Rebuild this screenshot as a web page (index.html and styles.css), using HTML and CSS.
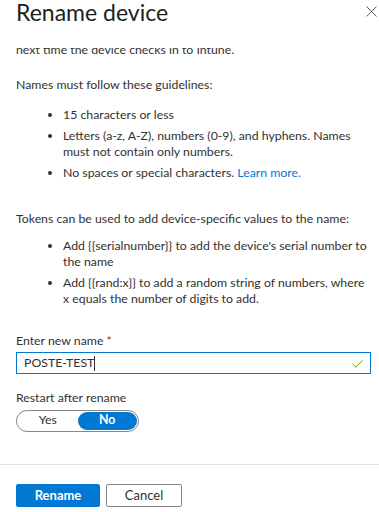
FILE: index.html
```html
<!DOCTYPE html>
<html>
<head>
<meta charset="utf-8">
<link rel="stylesheet" href="styles.css">
</head>
<body>
<div class="panel">
  <header class="header">
    <h1 class="title">Rename device</h1>
    <button class="close" aria-label="Close">
      <svg width="11" height="11" viewBox="0 0 11 11"><path d="M0.5 0.5 L10.5 10.5 M10.5 0.5 L0.5 10.5" stroke="#605e5c" stroke-width="1" fill="none"/></svg>
    </button>
  </header>
  <div class="content">
    <div class="scroll">
      <p class="para first">next time the device checks in to Intune.</p>
      <p class="para">Names must follow these guidelines:</p>
      <ul class="list">
        <li>15 characters or less</li>
        <li>Letters (a-z, A-Z), numbers (0-9), and hyphens. Names must not contain only numbers.</li>
        <li>No spaces or special characters. <a class="link" href="#">Learn more.</a></li>
      </ul>
      <p class="para tokens">Tokens can be used to add device-specific values to the name:</p>
      <ul class="list">
        <li>Add {{serialnumber}} to add the device's serial number to the name</li>
        <li>Add {{rand:x}} to add a random string of numbers, where x equals the number of digits to add.</li>
      </ul>
      <div class="field">
        <label class="label">Enter new name <span class="req">*</span></label>
        <div class="input">
          <span class="value">POSTE-TEST</span><span class="caret"></span>
          <svg class="check" width="11" height="8" viewBox="0 0 11 8"><path d="M0.5 4 L3.8 7.2 L10.5 0.5" stroke="#57a300" stroke-width="1" fill="none"/></svg>
        </div>
      </div>
      <div class="field restart">
        <label class="label">Restart after rename</label>
        <div class="toggle">
          <span class="opt">Yes</span>
          <span class="opt on">No</span>
        </div>
      </div>
    </div>
  </div>
  <footer class="footer">
    <button class="btn primary">Rename</button>
    <button class="btn secondary">Cancel</button>
  </footer>
</div>
</body>
</html>
```
FILE: styles.css
```css
* { box-sizing: border-box; }
html, body { margin: 0; padding: 0; background: #fff; }
body {
  font-family: Lato, "Open Sans", sans-serif;
  color: #323130;
  font-size: 12.3px;
  line-height: 16.5px;
}
.panel {
  width: 379px;
  height: 512px;
  display: flex;
  flex-direction: column;
}
.header {
  height: 48px;
  flex: none;
  display: flex;
  justify-content: space-between;
  align-items: flex-start;
  padding-left: 16px;
}
.title {
  margin: 0;
  font-weight: 400;
  font-size: 23px;
  line-height: 24px;
  color: #201f1e;
}
.close {
  border: 0;
  background: none;
  padding: 0;
  margin: 6px 2px 0 0;
  width: 11px;
  height: 11px;
  display: flex;
}
.content {
  height: 416px;
  flex: none;
  overflow: hidden;
  padding: 0 8px 0 16px;
}
.scroll { margin-top: -6px; }
.para { margin: 0 0 15px; }
.para.first { margin-bottom: 18px; }
.para + .list { margin-top: -1px; }
.para.tokens { margin-top: 30px; margin-bottom: 11px; }
.list {
  margin: 0;
  padding-left: 47px;
}
.list li { margin-bottom: 4px; }
.link { color: #0078d4; text-decoration: none; }
.field { margin-top: 25px; }
.label { display: block; margin-bottom: 3px; }
.req { color: #a4262c; }
.input {
  height: 22px;
  border: 1px solid #0078d4;
  display: flex;
  align-items: center;
  padding: 0 7px;
}
.caret {
  width: 1px;
  height: 15px;
  background: #323130;
}
.check { margin-left: auto; margin-top: 1px; }
.field.restart { margin-top: 16px; }
.toggle {
  width: 123px;
  height: 22px;
  border: 1px solid #8a8886;
  border-radius: 11px;
  display: flex;
  padding: 1px;
}
.opt {
  flex: 1;
  display: flex;
  align-items: center;
  justify-content: center;
  border-radius: 10px;
}
.opt.on {
  background: #0078d4;
  color: #fff;
  font-weight: 700;
}
.footer {
  flex: 1;
  border-top: 1px solid #e1dfdd;
  display: flex;
  align-items: flex-start;
  gap: 6px;
  padding: 19px 16px 0;
}
.btn {
  height: 23px;
  font-family: inherit;
  font-size: 13px;
  line-height: 17px;
  padding: 0;
  border-radius: 2px;
}
.primary {
  width: 84px;
  background: #0078d4;
  color: #fff;
  border: 1px solid #0078d4;
  font-weight: 700;
}
.secondary {
  width: 76px;
  background: #fff;
  color: #323130;
  border: 1px solid #8a8886;
}
```
